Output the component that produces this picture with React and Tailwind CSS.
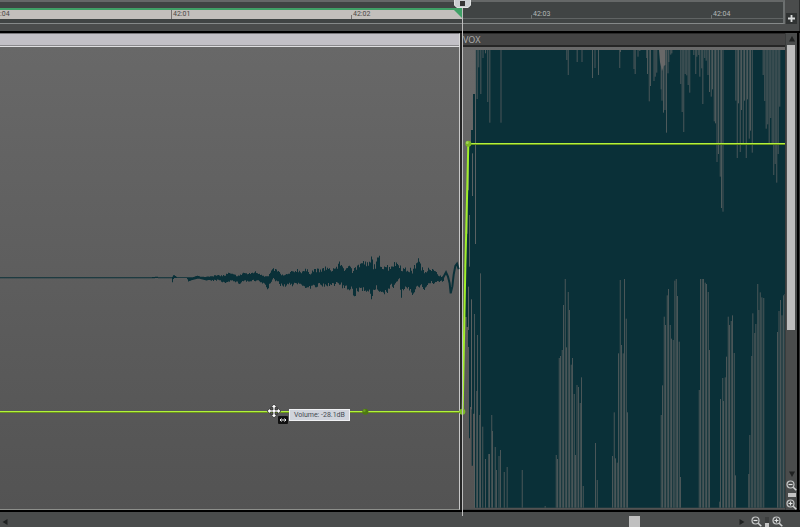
const RULER_MARKS = [
  { label: '42:01', tone: 'text-[#4b4644]', tick: 'h-[9px] bg-[#77716f]' },
  { label: '42:02', tone: 'text-[#4b4644]', tick: 'h-1 bg-[#77716f]' },
  { label: '42:03', tone: 'text-[#b4b8b8]', tick: 'h-1 bg-[#707474]' },
  { label: '42:04', tone: 'text-[#b4b8b8]', tick: 'h-1 bg-[#707474]' },
]

// All wave data is in thirds of a pixel, on a 2355 x 1389 canvas.
const QUIET_WAVE = [
  [0, 112, 115], [448, 112, 115], [470, 110, 114], [474, 112, 115], [513, 112, 115], [515, 112, 130],
  [520, 104, 114], [530, 112, 114], [560, 112, 114], [563, 112, 125], [575, 112, 120], [592, 107, 116],
  [600, 110, 117], [615, 111, 121], [635, 107, 122], [655, 107, 120], [672, 107, 128], [685, 100, 122],
  [700, 105, 123], [718, 108, 130], [728, 98, 122], [745, 103, 124], [762, 96, 122], [775, 100, 124],
  [790, 106, 130], [802, 112, 146], [810, 99, 128], [818, 89, 118], [830, 91, 122], [840, 102, 134],
  [850, 108, 138], [865, 102, 132], [875, 97, 134], [890, 90, 128], [900, 95, 134], [915, 92, 138],
  [930, 97, 142], [945, 89, 138], [960, 94, 134], [975, 84, 140], [990, 92, 130], [1010, 82, 132],
  [1020, 70, 134], [1027, 82, 140], [1040, 92, 145], [1050, 76, 144], [1056, 92, 154], [1062, 72, 178],
  [1068, 84, 150], [1080, 72, 146], [1095, 70, 142], [1105, 80, 152], [1114, 56, 172], [1120, 80, 150],
  [1128, 74, 146], [1135, 50, 142], [1142, 78, 150], [1152, 76, 168], [1165, 84, 145], [1175, 76, 138],
  [1190, 70, 128], [1197, 78, 118], [1202, 80, 165], [1210, 90, 145], [1225, 90, 150], [1237, 94, 158],
  [1245, 78, 150], [1252, 56, 138], [1262, 82, 134], [1272, 98, 146], [1285, 82, 130], [1300, 93, 128],
  [1315, 105, 126], [1330, 112, 122],
]

const PEAKS_TOP = [
  [80, 90], [84, 135], [111, 96], [125, 96], [157, 144], [164, 114], [175, 135], [238, 114], [241, 66],
  [281, 117], [285, 132], [293, 80], [299, 63], [319, 84], [322, 132], [327, 214], [331, 168], [341, 153],
  [345, 140], [349, 128], [363, 178], [365, 212], [370, 248], [374, 240], [379, 308], [383, 130],
  [386, 96], [391, 74], [395, 70], [421, 162], [426, 246], [430, 306], [435, 132], [439, 136], [444, 165],
  [448, 188], [461, 75], [466, 132], [470, 80], [475, 75], [479, 140], [484, 115], [488, 222], [493, 84],
  [498, 92], [503, 135], [508, 186], [513, 200], [517, 178], [522, 274], [526, 280], [530, 396],
  [535, 372], [540, 440], [544, 534], [548, 545], [587, 212], [591, 384], [595, 220], [600, 366],
  [604, 240], [609, 340], [613, 212], [618, 384], [622, 208], [627, 326], [631, 302], [636, 368],
  [669, 135], [673, 213], [678, 296], [682, 283], [687, 340], [691, 264], [696, 345], [700, 435],
  [705, 402], [709, 458], [714, 372], [718, 230],
  [-189, 207], [-185, 112], [-178, 192], [-172, 84], [-164, 70], [-158, 216], [-151, 278], [-118, 278],
]

const PEAKS_BOTTOM = [
  [103, 162], [109, 393], [112, 225], [118, 465], [121, 40], [127, 500], [136, 597], [145, 582],
  [148, 582], [154, 465], [157, 513], [165, 561], [169, 630], [176, 588], [181, 570], [192, 636],
  [201, 621], [246, 630], [315, 738], [348, 585], [352, 597], [357, 294], [361, 288], [366, 270],
  [370, 135], [375, 57], [379, 262], [384, 96], [388, 150], [393, 314], [397, 294], [402, 402],
  [406, 585], [410, 375], [415, 381], [420, 429], [424, 352], [429, 678], [466, 549], [471, 660],
  [517, 588], [522, 457], [526, 595], [531, 608], [535, 280], [540, 60], [544, 255], [549, 280],
  [553, 57], [558, 176], [562, 457], [663, 465], [667, 376], [672, 170], [676, 195], [681, 106],
  [685, 87], [690, 195], [694, 236], [699, 240], [704, 62], [708, 57], [712, 108], [717, 245],
  [721, 651], [777, 390], [781, 57], [786, 57], [790, 57], [795, 68], [799, 72], [804, 96], [808, 270],
  [838, 725], [841, 417], [847, 354], [850, 423], [855, 352], [859, 290], [864, 170], [868, 195],
  [873, 183], [877, 166], [882, 279], [886, 646], [925, 642], [929, 525], [934, 288], [938, 160],
  [943, 219], [947, 192], [952, 72], [956, 150], [960, 97], [965, 112], [970, 114], [1012, 216],
  [1016, 153], [1021, 120], [1025, 166], [1030, 106], [1034, 102],
]

function quietPath() {
  const top = []
  const bottom = []
  let seed = 7
  const random = () => {
    seed = (seed * 16807) % 2147483647
    return seed / 2147483647
  }
  let i = 0
  for (let x = 0; x < 1330; x += 3) {
    while (QUIET_WAVE[i + 1][0] < x) i++
    const [x0, t0, b0] = QUIET_WAVE[i]
    const [x1, t1, b1] = QUIET_WAVE[i + 1]
    const k = (x - x0) / (x1 - x0)
    const t = t0 + (t1 - t0) * k
    const b = b0 + (b1 - b0) * k
    const swing = x < 620 ? 0 : (b - t) * 0.3
    top.push(`L${x} ${(t - (random() - 0.5) * swing).toFixed(1)}h3`)
    bottom.unshift(`L${x + 3} ${(b + (random() - 0.5) * swing).toFixed(1)}h-3`)
  }
  return `M0 113${top.join('')}${bottom.join('')}Z`
}

function Waveforms() {
  return (
    <svg
      className="absolute inset-0 h-full w-full"
      viewBox="0 0 2355 1389"
      preserveAspectRatio="none"
      aria-hidden="true"
    >
      <g transform="translate(0 579)">
        <path d={quietPath()} fill="#0a3038" />
        <path
          d="M1326 119L1332 108L1338 97L1344 110L1349 130L1352 160L1357 140L1361 104L1366 78L1371 71L1376 88"
          fill="none"
          stroke="#0a3038"
          strokeWidth="6"
        />
      </g>

      {/* loud clip: solid block, ragged on its left edge */}
      <path
        d="M1428 9H2355V1382H1425V1100H1419V1256H1415V1080H1410V1174H1407V900H1404V840H1400V810H1394V660H1396V560H1403V430H1407V290H1413V249H1419V141H1428Z"
        fill="#0a3038"
      />
      <g transform="translate(1620 -51)" fill="#5a6162">
        {PEAKS_TOP.map(([x, y], i) => (
          <rect key={x} x={x - 1} y="60" width={i % 2 ? 4 : 3} height={y - 60} opacity={i % 2 ? 0.6 : 0.85} />
        ))}
        <path d="M357 60H376V105L371 108L366 124L360 96Z" fill="#686868" />
        <rect x="-204" y="370" width="3" height="128" />
        <rect x="-195" y="60" width="3" height="582" />
        <rect x="-213" y="555" width="3" height="155" />
      </g>
      <g transform="translate(1320 639)" fill="#5a6060">
        {PEAKS_BOTTOM.map(([x, y], i) => (
          <rect key={x} x={x - 1} y={y} width={i % 2 ? 4 : 3} height={743 - y} opacity={i % 2 ? 0.6 : 0.8} />
        ))}
        <rect x="84" y="80" width="3" height="130" />
        <rect x="93" y="118" width="3" height="330" />
      </g>

      {/* volume envelope */}
      <g fill="none">
        <path d="M0 1096.500H1387M1405 292.500H2355" stroke="#6b931c" strokeWidth="3" />
        <path d="M0 1093.500H1387M1405 289.500H2355" stroke="#b2f23c" strokeWidth="3" />
        <path d="M1388 1093L1396 660L1405 289" stroke="#a0ee2a" strokeWidth="6" />
      </g>
      <circle cx="1096" cy="1094" r="9" fill="#4d7a10" />
      <circle cx="1093" cy="1091" r="4" fill="#6b9c22" />
      <circle cx="1387" cy="1094" r="9" fill="#7dbb26" />
      <circle cx="1405" cy="290" r="9" fill="#79b324" />
      <circle cx="1402" cy="287" r="4" fill="#a5d65a" />
    </svg>
  )
}

function Ruler() {
  return (
    <div className="relative h-6 overflow-hidden border-t-2 border-r-2 border-b border-t-[#656868] border-r-[#6c7070] border-b-[#858989] bg-[#404444]">
      <div className="grid h-full grid-cols-[462fr_321fr] pt-1.5">
        <div className="relative h-[11px] border-t-2 border-[#3fa066] bg-[#c3bfbc]">
          <svg className="absolute top-0 right-0 h-2 w-2" viewBox="0 0 8 8" aria-hidden="true">
            <path d="M0 0H8V8Z" fill="#3fa066" />
          </svg>
        </div>
        <div className="h-[11px] border-b border-[#606464]" />
      </div>
      <div className="absolute inset-x-0 top-2 flex h-[9px] font-['Roboto'] text-[7px] leading-[8px]">
        <span className="w-[171px] shrink-0 text-[#4b4644]">:04</span>
        {RULER_MARKS.map((mark) => (
          <span key={mark.label} className={`flex w-[180px] shrink-0 items-end gap-px ${mark.tone}`}>
            <i className={`w-px ${mark.tick}`} />
            <span className="h-full">{mark.label}</span>
          </span>
        ))}
      </div>
    </div>
  )
}

function HoverReadout() {
  return (
    <div className="absolute top-[357px] left-[34%] flex">
      <svg className="h-[21px] w-[22px]" viewBox="-1 0 22 21" aria-hidden="true">
        <rect x="10" y="12" width="10" height="8" rx="1" fill="#111" />
        <path d="M12 16H18M13.500 14.500L12 16L13.500 17.500M16.500 14.500L18 16L16.500 17.500" stroke="#eee" fill="none" />
        <path
          d="M6 0L9 3.500H7V6H9.500V4L13 7L9.500 10V8H7V10.500H9L6 14L3 10.500H5V8H2.500V10L-1 7L2.500 4V6H5V3.500H3Z"
          fill="#fff"
          stroke="#222"
          strokeWidth="0.7"
        />
      </svg>
      <span
        role="tooltip"
        className="mt-[5px] flex h-3 items-center border border-[#f0f1f4] bg-[#d0d4dc] px-1 font-['Roboto'] text-[7px] leading-[8px] whitespace-nowrap text-[#444a52]"
      >
        Volume: -28.1dB
      </span>
    </div>
  )
}

function Tracks() {
  return (
    <div className="relative grid min-h-0 flex-1 grid-cols-[462fr_323fr] border-y-2 border-black">
      <section className="flex flex-col border-r-2 border-[#242424]">
        <div className="h-3.5 border-t border-r border-b border-t-[#77767a] border-r-[#d8d8d8] border-b-[#dedee0] bg-[#c2c0c6]">
          <div className="h-full border-b border-[#8a898c]" />
        </div>
        <div className="flex-1 border-r border-b border-r-[#c8c8c8] border-b-[#8c8e8a] bg-linear-to-b from-[#686868] to-[#535353]" />
      </section>
      <section className="flex flex-col">
        <h2 className="h-3.5 border-t border-b-2 border-t-[#2a2a2a] border-b-[#262626] bg-[#444] pl-px text-[9px] leading-[11px] text-[#aaa]">
          VOX
        </h2>
        <div className="flex-1 border-b border-[#454747] bg-linear-to-b from-[#6a6a6a] to-[#535353]" />
      </section>
      <div className="absolute inset-x-0 top-3.5 bottom-0">
        <Waveforms />
        <HoverReadout />
      </div>
    </div>
  )
}

function Playhead() {
  return (
    <div className="pointer-events-none absolute inset-x-0 top-0 -bottom-1 grid grid-cols-[462fr_323fr]">
      <div className="relative col-start-2 border-l border-[#bdbdbd]">
        <button aria-label="Playhead" className="pointer-events-auto absolute top-0 -left-[9px] h-2 w-[17px]">
          <svg viewBox="0 0 17 8" className="block h-full w-full" aria-hidden="true">
            <path d="M0 0H17V5L14 8H3L0 5Z" fill="#c9cdd0" />
            <path d="M0.500 0V5L3 7.500H14L16.500 5V0" fill="none" stroke="#e0e2e2" />
            <path d="M6 1H11V6H6Z" fill="#333" />
          </svg>
        </button>
      </div>
    </div>
  )
}

function ArrowButton({ label, d, className }) {
  return (
    <button aria-label={label} className={className}>
      <svg className="block h-1.5 w-1.5" viewBox="0 0 6 6" aria-hidden="true">
        <path d={d} fill="#1f2121" />
      </svg>
    </button>
  )
}

function ZoomButton({ label, plus }) {
  return (
    <button aria-label={label} className="block shrink-0">
      <svg className="block h-[11px] w-[11px]" viewBox="0 0 11 11" fill="none" aria-hidden="true">
        <circle cx="4.500" cy="4.500" r="3.500" stroke="#c4c6c6" strokeWidth="1.200" />
        <path d="M7.200 7.200L10.300 10.300" stroke="#d0d2d2" strokeWidth="1.600" />
        <path d={plus ? 'M2.500 4.500H6.500M4.500 2.500V6.500' : 'M2.500 4.500H6.500'} stroke="#e0e2e2" strokeWidth="1.200" />
      </svg>
    </button>
  )
}

function SideRail() {
  return (
    <div className="flex w-[15px] shrink-0 flex-col">
      <div className="h-[31px] border-r border-[#2c2e2e] pt-[13px] pl-px">
        <button aria-label="Add" className="block h-[11px] w-[11px] bg-[#303333]">
          <svg className="block h-full w-full" viewBox="0 0 11 11" aria-hidden="true">
            <path d="M2 5.500H9M5.500 2V9" stroke="#d8dada" strokeWidth="1.800" />
          </svg>
        </button>
      </div>
      <div className="flex min-h-0 flex-1 border-y-2 border-black">
        <div className="flex flex-1 flex-col items-center border-l border-[#3a3c3c]">
          <ArrowButton label="Scroll up" d="M3 0L6 5.500H0Z" className="mt-[3px] mb-[3px]" />
          <div className="min-h-0 w-full flex-1 pr-0.5 pl-px">
            <div className="h-[67%] bg-[#bdbdbd]" />
          </div>
          <ArrowButton label="Scroll down" d="M0 0.500H6L3 6Z" className="mb-[3px]" />
          <ZoomButton label="Zoom out vertically" />
          <div className="my-[2px] h-1 w-2 bg-[#c4c4c4]" />
          <ZoomButton label="Zoom in vertically" plus />
        </div>
        <div className="w-[3px] border-r border-l-2 border-r-[#333] border-l-black" />
      </div>
    </div>
  )
}

function BottomBar() {
  return (
    <div className="flex h-[15px] shrink-0 items-end pr-[17px]">
      <ArrowButton label="Scroll left" d="M5.500 0V6L0.500 3Z" className="mb-[2px] ml-0.5" />
      <div className="flex flex-1">
        <div className="w-[85%]" />
        <div className="h-[11px] w-[11px] bg-[#c0c0c0]" />
      </div>
      <ArrowButton label="Scroll right" d="M0.500 0V6L5.500 3Z" className="mr-1.5 mb-[2px]" />
      <ZoomButton label="Zoom out" />
      <div className="mx-[3px] flex h-2.5 w-1 items-end bg-[#3c3e3e]">
        <div className="h-1 w-full bg-[#c4c4c4]" />
      </div>
      <ZoomButton label="Zoom in" plus />
    </div>
  )
}

export default function App() {
  return (
    <div className="flex h-screen flex-col overflow-hidden bg-[#4a4c4c] font-['Noto_Sans','Open_Sans',sans-serif]">
      <div className="flex min-h-0 flex-1">
        <main className="relative flex min-w-0 flex-1 flex-col">
          <Ruler />
          <div className="h-[7px] shrink-0" />
          <Tracks />
          <Playhead />
        </main>
        <SideRail />
      </div>
      <BottomBar />
    </div>
  )
}
